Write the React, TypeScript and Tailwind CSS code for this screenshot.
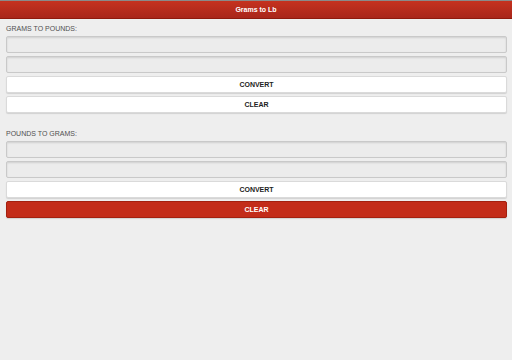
import React, { useState } from 'react';

function Field({ value, onChange }: { value: string; onChange: (v: string) => void }) {
  return (
    <input
      value={value}
      onChange={(e) => onChange(e.target.value)}
      className="block w-full h-[17px] rounded-[2px] border border-[#c9c9c9] bg-[#ececec] px-1 text-[8px] text-[#333] shadow-[inset_0_1px_2px_rgba(0,0,0,0.12)] outline-none"
    />
  );
}

function Button({
  label,
  variant = 'light',
  onClick,
}: {
  label: string;
  variant?: 'light' | 'red';
  onClick?: () => void;
}) {
  const cls =
    variant === 'red'
      ? 'bg-[#c32c19] border-[#a3200f] text-white'
      : 'bg-white border-[#dadada] text-[#222]';
  return (
    <button
      onClick={onClick}
      className={`block w-full h-[17px] rounded-[2px] border text-[7px] font-bold leading-none shadow-[0_1px_1px_rgba(0,0,0,0.12)] ${cls}`}
    >
      {label}
    </button>
  );
}

function Section({
  title,
  from,
  setFrom,
  to,
  setTo,
  onConvert,
  onClear,
  clearRed,
}: {
  title: string;
  from: string;
  setFrom: (v: string) => void;
  to: string;
  setTo: (v: string) => void;
  onConvert: () => void;
  onClear: () => void;
  clearRed?: boolean;
}) {
  return (
    <div>
      <div className="h-[10px] text-[7px] leading-[10px] text-[#505050]">{title}</div>
      <div className="mt-[2px] flex flex-col gap-[3px]">
        <Field value={from} onChange={setFrom} />
        <Field value={to} onChange={setTo} />
        <Button label="CONVERT" onClick={onConvert} />
        <Button label="CLEAR" variant={clearRed ? 'red' : 'light'} onClick={onClear} />
      </div>
    </div>
  );
}

export default function App() {
  const [g, setG] = useState('');
  const [lb, setLb] = useState('');
  const [lb2, setLb2] = useState('');
  const [g2, setG2] = useState('');

  return (
    <div
      className="w-[512px] h-[360px] bg-[#eeeeee] overflow-hidden"
      style={{ fontFamily: '"Liberation Sans", Arial, sans-serif' }}
    >
      <div className="h-[19px] border-t border-[#8a8a8a] border-b border-b-[#8e1a0d] bg-gradient-to-b from-[#c5321f] to-[#a9261a] flex items-center justify-center">
        <span className="text-[7px] font-bold text-white leading-none">Grams to Lb</span>
      </div>
      <div className="pl-[6px] pr-[5px] pt-[5px]">
        <Section
          title="GRAMS TO POUNDS:"
          from={g}
          setFrom={setG}
          to={lb}
          setTo={setLb}
          onConvert={() => setLb(g ? (parseFloat(g) / 453.592).toFixed(4) : '')}
          onClear={() => {
            setG('');
            setLb('');
          }}
        />
        <div className="mt-[16px]">
          <Section
            title="POUNDS TO GRAMS:"
            from={lb2}
            setFrom={setLb2}
            to={g2}
            setTo={setG2}
            onConvert={() => setG2(lb2 ? (parseFloat(lb2) * 453.592).toFixed(2) : '')}
            onClear={() => {
              setLb2('');
              setG2('');
            }}
            clearRed
          />
        </div>
      </div>
    </div>
  );
}
